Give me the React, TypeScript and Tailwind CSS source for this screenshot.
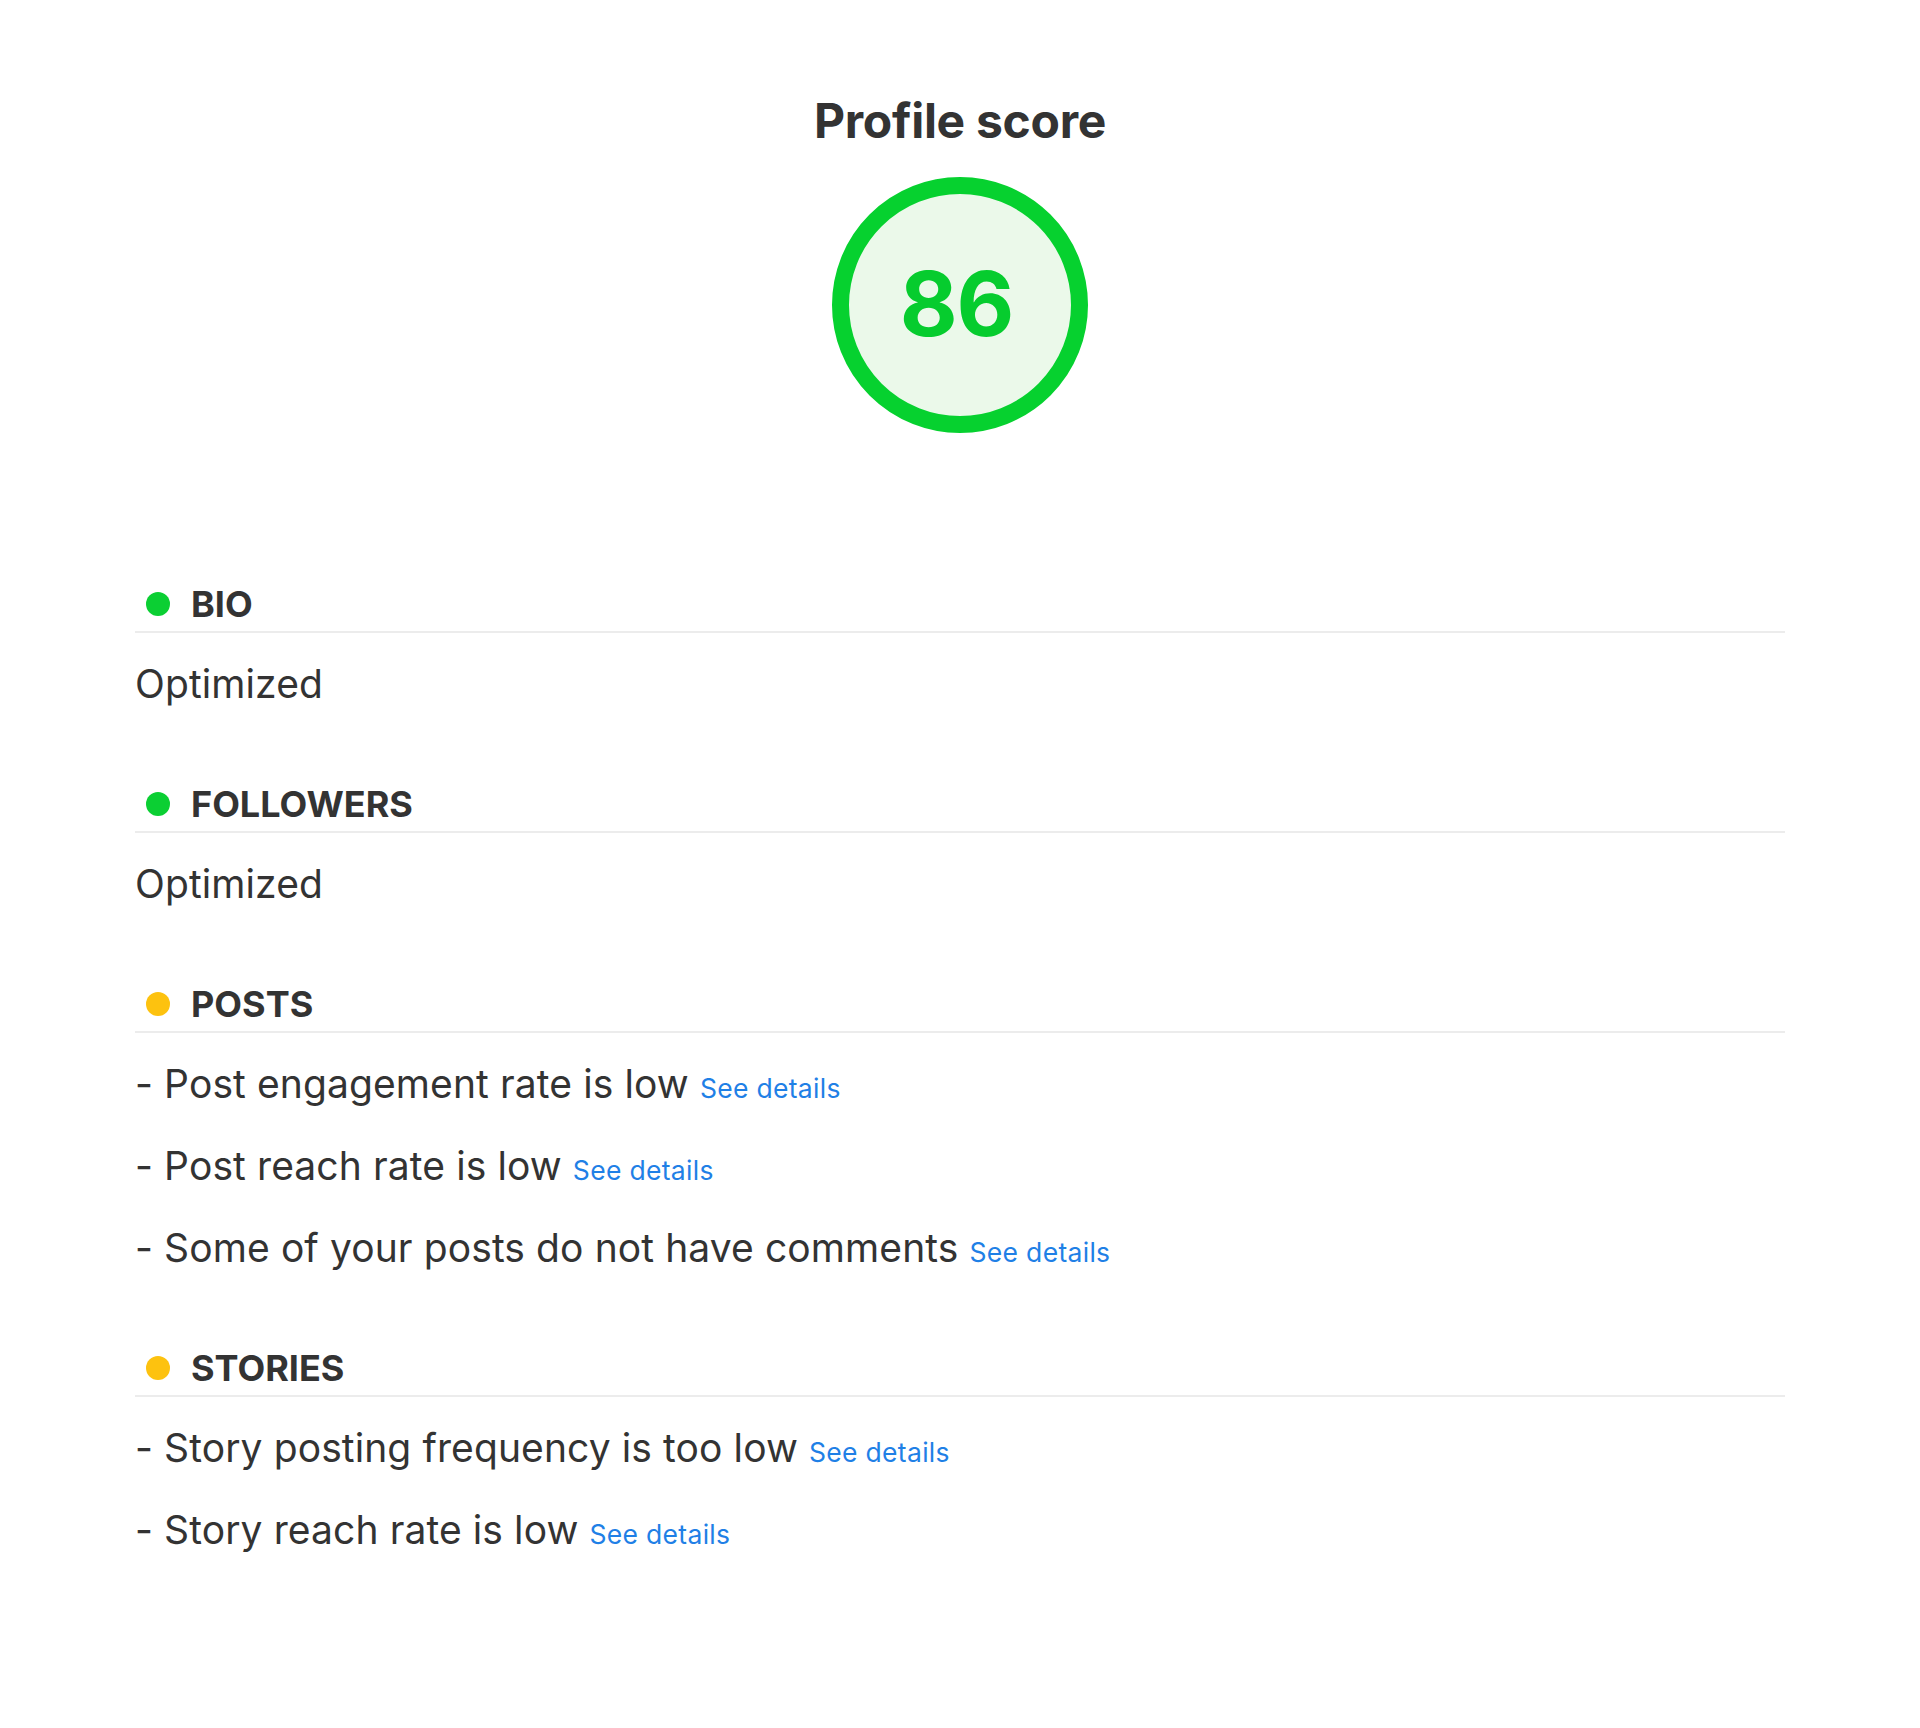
import React from 'react';

type Item = { text: string; link?: boolean };

interface Section {
  title: string;
  status: 'good' | 'warn';
  items: Item[];
}

const sections: Section[] = [
  { title: 'BIO', status: 'good', items: [{ text: 'Optimized' }] },
  { title: 'FOLLOWERS', status: 'good', items: [{ text: 'Optimized' }] },
  {
    title: 'POSTS',
    status: 'warn',
    items: [
      { text: '- Post engagement rate is low', link: true },
      { text: '- Post reach rate is low', link: true },
      { text: '- Some of your posts do not have comments', link: true },
    ],
  },
  {
    title: 'STORIES',
    status: 'warn',
    items: [
      { text: '- Story posting frequency is too low', link: true },
      { text: '- Story reach rate is low', link: true },
    ],
  },
];

export default function App() {
  return (
    <div className="min-h-[1728px] bg-white text-[#333333] font-['Inter','Noto_Sans',sans-serif] pt-[93px]">
      <h1 className="text-center text-[48px] leading-[56px] font-bold tracking-[-0.3px]">Profile score</h1>

      <div className="mx-auto mt-[28px] w-[256px] h-[256px] rounded-full border-[17px] border-[#06d12f] bg-[#ebf9ea] flex items-center justify-center">
        <span className="text-[89px] leading-none font-bold text-[#06cc2e] -mt-[4px] mr-[7px] tracking-[-1px]">86</span>
      </div>

      <div className="mx-auto w-[1650px] mt-[146px]">
        {sections.map((s, i) => (
          <div key={s.title} className={i > 0 ? 'mt-[54px]' : ''}>
            <div className="h-[54px] flex items-center border-b-2 border-[#ececec] pb-[2px]">
              <span
                className={`ml-[11px] w-[24px] h-[24px] rounded-full ${
                  s.status === 'good' ? 'bg-[#0bcf33]' : 'bg-[#fdc20f]'
                }`}
              />
              <span className="ml-[21px] text-[36px] leading-none font-bold">{s.title}</span>
            </div>
            <div className="mt-[10px]">
              {s.items.map((item) => (
                <div key={item.text} className="h-[82px] leading-[82px] text-[39px] tracking-[0.1px]">
                  {item.text}
                  {item.link && (
                    <>
                      {' '}
                      <a href="#" className="text-[26.5px] text-[#1f80e6] tracking-[0.3px]">
                        See details
                      </a>
                    </>
                  )}
                </div>
              ))}
            </div>
          </div>
        ))}
      </div>
    </div>
  );
}
